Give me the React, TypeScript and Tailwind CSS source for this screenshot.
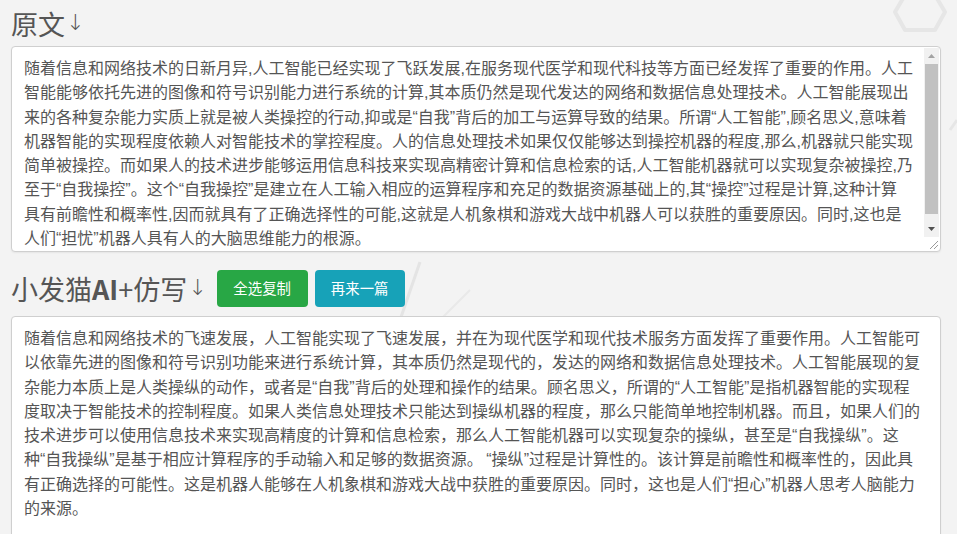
import React from "react";

const orig = [
  "随着信息和网络技术的日新月异,人工智能已经实现了飞跃发展,在服务现代医学和现代科技等方面已经发挥了重要的作用。人工",
  "智能能够依托先进的图像和符号识别能力进行系统的计算,其本质仍然是现代发达的网络和数据信息处理技术。人工智能展现出",
  "来的各种复杂能力实质上就是被人类操控的行动,抑或是“自我”背后的加工与运算导致的结果。所谓“人工智能”,顾名思义,意味着",
  "机器智能的实现程度依赖人对智能技术的掌控程度。人的信息处理技术如果仅仅能够达到操控机器的程度,那么,机器就只能实现",
  "简单被操控。而如果人的技术进步能够运用信息科技来实现高精密计算和信息检索的话,人工智能机器就可以实现复杂被操控,乃",
  "至于“自我操控”。这个“自我操控”是建立在人工输入相应的运算程序和充足的数据资源基础上的,其“操控”过程是计算,这种计算",
  "具有前瞻性和概率性,因而就具有了正确选择性的可能,这就是人机象棋和游戏大战中机器人可以获胜的重要原因。同时,这也是",
  "人们“担忧”机器人具有人的大脑思维能力的根源。",
];

const rewritten = [
  "随着信息和网络技术的飞速发展，人工智能实现了飞速发展，并在为现代医学和现代技术服务方面发挥了重要作用。人工智能可",
  "以依靠先进的图像和符号识别功能来进行系统计算，其本质仍然是现代的，发达的网络和数据信息处理技术。人工智能展现的复",
  "杂能力本质上是人类操纵的动作，或者是“自我”背后的处理和操作的结果。顾名思义，所谓的“人工智能”是指机器智能的实现程",
  "度取决于智能技术的控制程度。如果人类信息处理技术只能达到操纵机器的程度，那么只能简单地控制机器。而且，如果人们的",
  "技术进步可以使用信息技术来实现高精度的计算和信息检索，那么人工智能机器可以实现复杂的操纵，甚至是“自我操纵”。这",
  "种“自我操纵”是基于相应计算程序的手动输入和足够的数据资源。 “操纵”过程是计算性的。该计算是前瞻性和概率性的，因此具",
  "有正确选择的可能性。这是机器人能够在人机象棋和游戏大战中获胜的重要原因。同时，这也是人们“担心”机器人思考人脑能力",
  "的来源。",
];

function Line({ text }: { text: string }) {
  const parts = text.split(/([“”,])/);
  return (
    <div className="h-[24.3px] whitespace-pre">
      {parts.map((p, i) =>
        p === "“" || p === "”" || p === "," ? (
          <span key={i} className="font-['Liberation_Sans',sans-serif]">
            {p}
          </span>
        ) : (
          <span key={i}>{p}</span>
        )
      )}
    </div>
  );
}

function Lines({ lines }: { lines: string[] }) {
  return (
    <div className="text-[16px] leading-[24.3px] text-[#555]">
      {lines.map((l, i) => (
        <Line key={i} text={l} />
      ))}
    </div>
  );
}

export default function App() {
  return (
    <div className="relative min-h-[534px] w-[957px] overflow-hidden bg-[#f3f3f3] font-['Noto_Sans_CJK_SC','Noto_Sans',sans-serif]">
      <svg
        className="pointer-events-none absolute left-0 top-0"
        width="957"
        height="534"
        viewBox="0 0 957 534"
      >
        <path
          d="M905 -5 L935 -5 L945 12 L935 30 L905 30 L895 12 Z"
          fill="none"
          stroke="#e6e6e6"
          strokeWidth="4"
          strokeLinejoin="round"
        />
        <line x1="420" y1="262" x2="400" y2="320" stroke="#e4e4e4" strokeWidth="3" />
        <line x1="470" y1="290" x2="440" y2="320" stroke="#e9e9e9" strokeWidth="2" />
        <line x1="950" y1="130" x2="957" y2="120" stroke="#e6e6e6" strokeWidth="3" />
      </svg>

      <div className="relative flex flex-col px-[11px] pr-[16px]">
        <div className="h-[46px] flex items-center text-[27px] leading-none text-[#555]">
          <span>原文</span>
          <span className="text-[22px] font-['DejaVu_Sans',sans-serif] font-light ml-[1px]">↓</span>
        </div>

        <div className="flex h-[206px] rounded-[4px] border border-[#cfcfcf] bg-white shadow-[0_1px_2px_rgba(0,0,0,0.06)]">
          <div className="flex-1 overflow-hidden pl-[12px] pt-[8px]">
            <Lines lines={orig} />
          </div>
          <div className="flex w-[16px] flex-col pt-[1px] pr-[1px]">
            <div className="flex w-[15px] flex-col bg-[#f1f1f1] h-[189px]">
              <div className="flex h-[16px] items-center justify-center">
                <svg width="7" height="4" viewBox="0 0 7 4">
                  <path d="M0 4 L3.5 0 L7 4 Z" fill="#a3a3a3" />
                </svg>
              </div>
              <div className="mx-[1px] h-[150px] bg-[#c1c1c1]" />
              <div className="flex-1" />
              <div className="flex h-[16px] items-center justify-center">
                <svg width="7" height="4" viewBox="0 0 7 4">
                  <path d="M0 0 L3.5 4 L7 0 Z" fill="#505050" />
                </svg>
              </div>
            </div>
            <div className="flex flex-1 items-end justify-end pb-[1px]">
              <svg width="12" height="12" viewBox="0 0 12 12">
                <line x1="11" y1="3" x2="3" y2="11" stroke="#9a9a9a" strokeWidth="1" />
                <line x1="11" y1="7" x2="7" y2="11" stroke="#9a9a9a" strokeWidth="1" />
              </svg>
            </div>
          </div>
        </div>

        <div className="flex h-[64px] items-center pt-[8px]">
          <div className="flex items-center text-[27px] leading-none text-[#555]">
            <span>小发猫</span>
            <span className="font-semibold">AI</span>
            <span>+仿写</span>
            <span className="text-[22px] font-['DejaVu_Sans',sans-serif] font-light ml-[1px]">↓</span>
          </div>
          <button className="ml-[10px] flex h-[37px] w-[91px] items-center justify-center rounded-[4px] bg-[#28a745] text-[14.4px] text-white">
            全选复制
          </button>
          <button className="ml-[7px] flex h-[37px] w-[90px] items-center justify-center rounded-[4px] bg-[#17a2b8] text-[14.4px] text-white">
            再来一篇
          </button>
        </div>

        <div className="h-[240px] rounded-[4px] border border-[#cfcfcf] bg-white pl-[12px] pt-[8px] shadow-[0_1px_2px_rgba(0,0,0,0.06)]">
          <Lines lines={rewritten} />
        </div>
      </div>
    </div>
  );
}
